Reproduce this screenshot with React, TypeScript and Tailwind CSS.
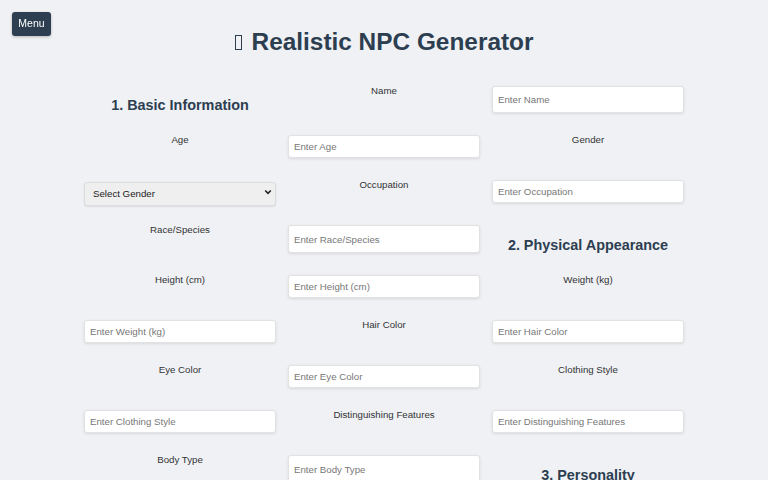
import React from "react";

type Item =
  | { kind: "h"; text: string }
  | { kind: "label"; text: string }
  | { kind: "input"; ph: string }
  | { kind: "select" };

const items: Item[] = [
  { kind: "h", text: "1. Basic Information" },
  { kind: "label", text: "Name" },
  { kind: "input", ph: "Enter Name" },
  { kind: "label", text: "Age" },
  { kind: "input", ph: "Enter Age" },
  { kind: "label", text: "Gender" },
  { kind: "select" },
  { kind: "label", text: "Occupation" },
  { kind: "input", ph: "Enter Occupation" },
  { kind: "label", text: "Race/Species" },
  { kind: "input", ph: "Enter Race/Species" },
  { kind: "h", text: "2. Physical Appearance" },
  { kind: "label", text: "Height (cm)" },
  { kind: "input", ph: "Enter Height (cm)" },
  { kind: "label", text: "Weight (kg)" },
  { kind: "input", ph: "Enter Weight (kg)" },
  { kind: "label", text: "Hair Color" },
  { kind: "input", ph: "Enter Hair Color" },
  { kind: "label", text: "Eye Color" },
  { kind: "input", ph: "Enter Eye Color" },
  { kind: "label", text: "Clothing Style" },
  { kind: "input", ph: "Enter Clothing Style" },
  { kind: "label", text: "Distinguishing Features" },
  { kind: "input", ph: "Enter Distinguishing Features" },
  { kind: "label", text: "Body Type" },
  { kind: "input", ph: "Enter Body Type" },
  { kind: "h", text: "3. Personality" },
  { kind: "label", text: "Traits" },
  { kind: "input", ph: "Enter Traits" },
];

export default function App() {
  return (
    <div
      className="min-h-[480px] bg-[#eff1f5] text-[#333]"
      style={{ fontFamily: '"Liberation Sans", Arial, sans-serif' }}
    >
      <button className="fixed left-[12px] top-[12px] h-[24px] w-[39px] rounded-[3px] bg-[#2c3e50] text-[10.5px] text-white shadow-[0_1px_3px_rgba(0,0,0,0.25)]">
        Menu
      </button>
      <div className="mx-auto w-[600px] pt-[28px] pb-10">
        <h1 className="flex items-center justify-center text-[24.4px] font-bold leading-[28px] text-[#2c3e50]">
          <span className="mr-[10px] inline-block h-[15px] w-[7px] border-[1.5px] border-[#2c3e50]" />
          <span>Realistic NPC Generator</span>
        </h1>
        <div className="mt-[30px] grid grid-cols-3 grid-rows-[27px_23px_23px_28px_23px_23px_23px_23px_28px_23px] gap-x-[12px] gap-y-[22px]">
          {items.map((it, i) => {
            if (it.kind === "h")
              return (
                <h2
                  key={i}
                  className="self-end text-center text-[14.4px] font-bold leading-[15px] text-[#2c3e50]"
                >
                  {it.text}
                </h2>
              );
            if (it.kind === "label")
              return (
                <label
                  key={i}
                  className="text-center text-[9.7px] leading-[10px] text-[#333]"
                >
                  {it.text}
                </label>
              );
            if (it.kind === "select")
              return (
                <div key={i} className="relative">
                  <select
                    className="h-[24px] w-full appearance-none rounded-[3px] border border-[#dcdcdc] bg-[#efefef] px-[8px] text-[9.7px] text-[#222] shadow-[0_1px_2px_rgba(0,0,0,0.08)]"
                    defaultValue=""
                  >
                    <option value="">Select Gender</option>
                    <option>Male</option>
                    <option>Female</option>
                    <option>Other</option>
                  </select>
                  <svg
                    className="pointer-events-none absolute right-[4px] top-[9px]"
                    width="8"
                    height="6"
                    viewBox="0 0 8 6"
                  >
                    <path d="M1.2 1.5 L4 4.3 L6.8 1.5" fill="none" stroke="#222" strokeWidth="1.6" />
                  </svg>
                </div>
              );
            return (
              <input
                key={i}
                placeholder={it.ph}
                className="h-full w-full rounded-[3px] border border-[#e2e2e2] bg-white px-[5px] text-[9.7px] text-[#333] shadow-[0_1px_3px_rgba(0,0,0,0.1)] outline-none placeholder:text-[#777]"
              />
            );
          })}
        </div>
      </div>
    </div>
  );
}
